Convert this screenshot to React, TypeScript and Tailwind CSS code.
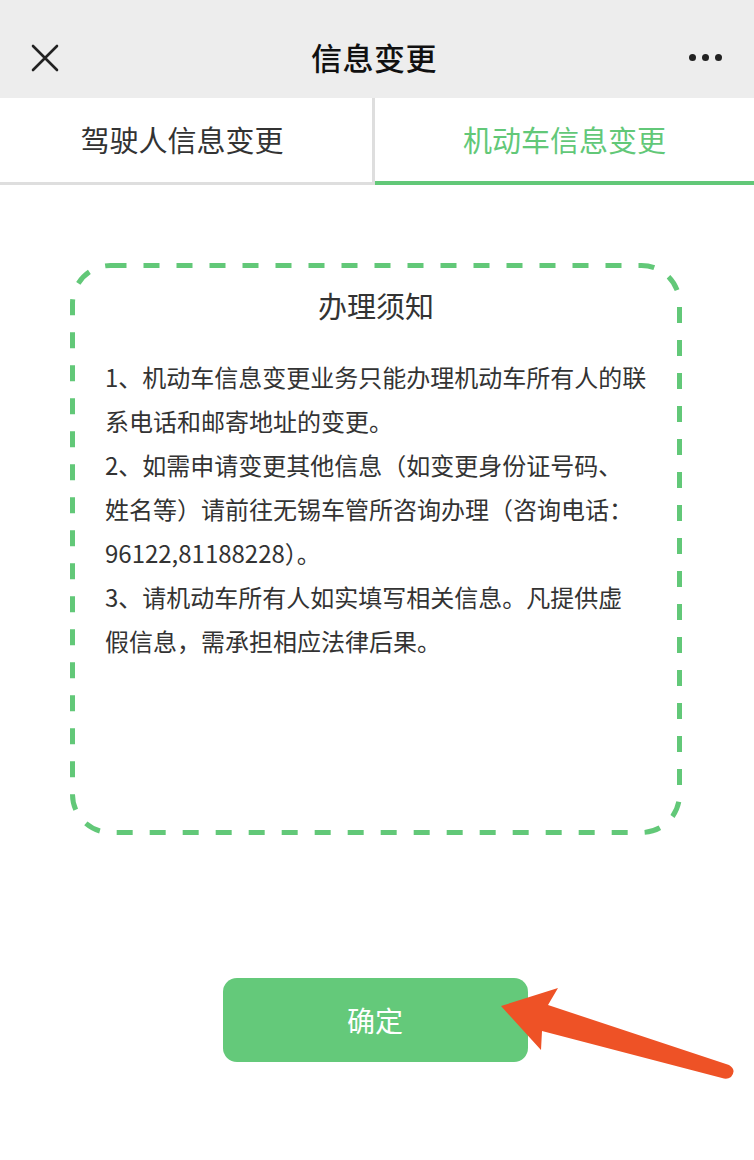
import React from "react";

const cjk = { fontFamily: '"Noto Sans CJK SC", "Noto Sans", sans-serif' };

const notice = [
	["1、机动车信息变更业务只能办理机动车所有人的联", "系电话和邮寄地址的变更。"],
	["2、如需申请变更其他信息（如变更身份证号码、", "姓名等）请前往无锡车管所咨询办理（咨询电话：", "96122,81188228）。"],
	["3、请机动车所有人如实填写相关信息。凡提供虚", "假信息，需承担相应法律后果。"],
];

export default function App() {
	return (
		<div className="relative w-[754px] h-[1160px] bg-white overflow-hidden" style={cjk}>
			{/* Top bar */}
			<div className="h-[98px] bg-[#ededed] flex items-center justify-between px-[30px] pt-[17px]">
				<svg width="28" height="28" viewBox="0 0 28 28" className="ml-[1px]">
					<path d="M2 2 L26 26 M26 2 L2 26" stroke="#222" strokeWidth="2.6" strokeLinecap="round" />
				</svg>
				<div className="text-[31px] font-medium text-[#111] tracking-[0.5px]">信息变更</div>
				<div className="flex items-center gap-[6px] pr-[2px]">
					<span className="w-[7px] h-[7px] rounded-full bg-[#222]" />
					<span className="w-[7px] h-[7px] rounded-full bg-[#222]" />
					<span className="w-[7px] h-[7px] rounded-full bg-[#222]" />
				</div>
			</div>

			{/* Tabs */}
			<div className="flex h-[87px]">
				<div className="w-[372px] flex items-center justify-center border-b-[3px] border-[#dedede] text-[29px] text-[#333] pr-[8px]">
					驾驶人信息变更
				</div>
				<div className="w-[3px] bg-[#dedede]" />
				<div className="flex-1 flex items-center justify-center border-b-[4px] border-[#62c878] text-[29px] text-[#62c878]">
					机动车信息变更
				</div>
			</div>

			{/* Notice box */}
			<div className="relative mt-[78px] ml-[70px] w-[612px] h-[572px] px-[35px] pt-[22px]">
				<svg className="absolute inset-0" width="612" height="572" viewBox="0 0 612 572">
					<rect
						x="2.5"
						y="2.5"
						width="607"
						height="567"
						rx="38"
						fill="none"
						stroke="#62c878"
						strokeWidth="5"
						strokeDasharray="16 17"
					/>
				</svg>
				<div className="relative text-center text-[29px] text-[#333] leading-[40px]">办理须知</div>
				<div className="relative mt-[30px] text-[24px] text-[#333] leading-[44px] whitespace-nowrap">
					{notice.map((para, i) => (
						<div key={i}>
							{para.map((line, j) => (
								<div key={j}>{line}</div>
							))}
						</div>
					))}
				</div>
			</div>

			{/* Confirm button */}
			<div className="mt-[143px] flex justify-center">
				<button className="w-[305px] h-[84px] mr-[4px] rounded-[14px] bg-[#64c97a] text-white text-[28px]">
					确定
				</button>
			</div>

			{/* Annotation arrow */}
			<svg className="absolute left-0 top-0 pointer-events-none" width="754" height="1160" viewBox="0 0 754 1160">
				<path
					d="M501 1006 L558 988 L548 1005 L729 1065 Q737 1070 731 1077 Q727 1080 722 1078 L542 1031 L541 1050 Z"
					fill="#ee5226"
				/>
			</svg>
		</div>
	);
}
